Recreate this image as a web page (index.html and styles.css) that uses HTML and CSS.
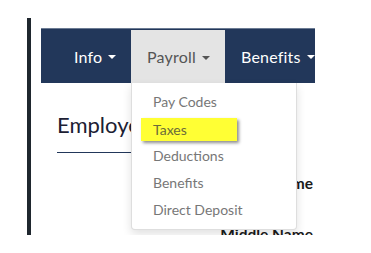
FILE: index.html
```html
<!DOCTYPE html>
<html>
<head>
<meta charset="utf-8">
<link rel="stylesheet" href="styles.css">
</head>
<body>
<div class="page">
  <div class="frame">
    <nav class="navbar">
      <div class="nav-item info">Info<span class="caret"></span></div>
      <div class="nav-item active">Payroll<span class="caret"></span>
        <ul class="dropdown">
          <li class="dd-item">Pay Codes</li>
          <li class="dd-item highlight">Taxes</li>
          <li class="dd-item">Deductions</li>
          <li class="dd-item">Benefits</li>
          <li class="dd-item">Direct Deposit</li>
        </ul>
      </div>
      <div class="nav-item">Benefits<span class="caret"></span></div>
    </nav>
    <section class="content">
      <h1 class="title">Employee</h1>
      <div class="form">
        <div class="label">First Name</div>
        <div class="label">Middle Name</div>
      </div>
    </section>
  </div>
</div>
</body>
</html>
```
FILE: styles.css
```css
html, body {
  margin: 0;
  background: #ffffff;
}
body {
  font-family: Lato, "Liberation Sans", sans-serif;
}
.page {
  padding: 18px 0 0 27px;
}
.frame {
  width: 284px;
  height: 217px;
  border-left: 4px solid #1f272e;
  overflow: hidden;
  position: relative;
}
.navbar {
  margin: 10px 0 0 10px;
  height: 54px;
  background: #22375a;
  border-top: 1px solid #6b7b93;
  display: flex;
  padding-left: 17px;
}
.nav-item {
  display: flex;
  align-items: center;
  padding: 0 16px;
  color: #ffffff;
  font-size: 16px;
  letter-spacing: 0.2px;
  white-space: nowrap;
  position: relative;
  flex: none;
  box-sizing: border-box;
}
.nav-item.info {
  width: 73px;
}
.nav-item.active {
  width: 94px;
  background: #e4e4e4;
  color: #555555;
  margin-top: 1px;
}
.caret {
  display: inline-block;
  width: 0;
  height: 0;
  margin-left: 6px;
  border-top: 4px solid currentColor;
  border-left: 4px solid transparent;
  border-right: 4px solid transparent;
  position: relative;
  top: 1px;
}
.dropdown {
  position: absolute;
  top: 100%;
  left: 0;
  width: 164px;
  margin: 0;
  padding: 5px 0 6px;
  list-style: none;
  background: #ffffff;
  border: 1px solid rgba(0, 0, 0, 0.13);
  border-top: 0;
  border-radius: 0 0 4px 4px;
  box-shadow: 0 4px 10px rgba(0, 0, 0, 0.12);
  z-index: 5;
  letter-spacing: 0;
}
.dd-item {
  padding-left: 21px;
  height: 27px;
  line-height: 27px;
  font-size: 14px;
  color: #777777;
}
.dd-item.highlight {
  margin: 3px 59px 1px 9px;
  padding-left: 12px;
  height: 23px;
  line-height: 23px;
  background: #ffff34;
  color: #6b6b3a;
  box-shadow: 2px 2px 3px rgba(0, 0, 0, 0.45);
}
.content {
  padding-left: 26px;
}
.title {
  display: inline-block;
  margin: 29px 0 0;
  padding-bottom: 14px;
  font-size: 22px;
  line-height: 26px;
  font-weight: 400;
  color: #1c2033;
  border-bottom: 1px solid #22375a;
}
.form {
  width: 256px;
  display: flex;
  flex-direction: column;
  gap: 31px;
  margin-top: 20px;
}
.label {
  text-align: right;
  font-size: 15.5px;
  line-height: 20px;
  font-weight: 700;
  color: #1a1a1a;
}
```
